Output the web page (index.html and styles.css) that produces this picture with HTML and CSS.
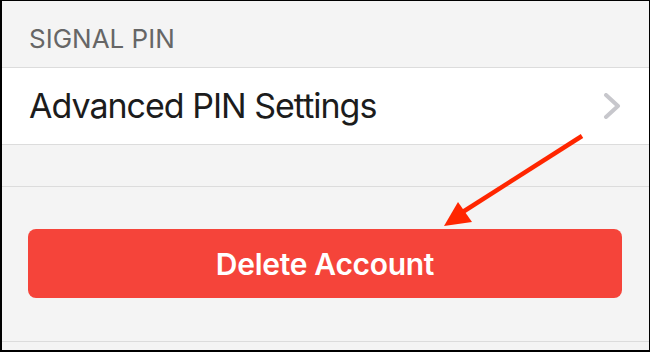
FILE: index.html
```html
<!DOCTYPE html>
<html>
<head>
<meta charset="utf-8">
<link rel="stylesheet" href="styles.css">
</head>
<body>
<div class="frame">
  <div class="section-header">SIGNAL PIN</div>
  <div class="row">
    <span class="row-label">Advanced PIN Settings</span>
    <svg class="chevron" width="18" height="26" viewBox="0 0 18 26"><path d="M3 2 L15 13 L3 24" fill="none" stroke="#c7c7cc" stroke-width="4" stroke-linecap="round" stroke-linejoin="round"/></svg>
  </div>
  <div class="spacer"></div>
  <div class="danger-zone">
    <button class="delete-btn">Delete Account</button>
  </div>
  <div class="footer"></div>
  <svg class="arrow" width="650" height="352" viewBox="0 0 650 352">
    <line x1="582" y1="136" x2="458" y2="215" stroke="#ff2600" stroke-width="4.5" stroke-linecap="butt"/>
    <polygon points="444,226 458,202 472,222" fill="#ff2600"/>
  </svg>
</div>
</body>
</html>
```
FILE: styles.css
```css
* { box-sizing: border-box; }
html, body { margin: 0; padding: 0; }
body {
  width: 650px;
  height: 352px;
  background: #f4f4f4;
  font-family: Inter, "Liberation Sans", sans-serif;
  overflow: hidden;
}
.frame {
  position: relative;
  width: 650px;
  height: 352px;
  border-style: solid;
  border-color: #000;
  border-width: 1px 1px 2px 2px;
  background: #f4f4f4;
  display: flex;
  flex-direction: column;
}
.section-header {
  height: 67px;
  padding-left: 27px;
  padding-top: 22px;
  font-size: 26px;
  line-height: 32px;
  color: #666666;
  border-bottom: 1px solid #dcdcdc;
  letter-spacing: 0;
}
.row {
  height: 77px;
  background: #fff;
  border-bottom: 1px solid #dcdcdc;
  display: flex;
  align-items: center;
  justify-content: space-between;
  padding: 0 28px 0 27px;
}
.row-label {
  font-size: 34px;
  color: #1c1c1c;
  letter-spacing: -1px;
  line-height: 40px;
}
.chevron { display: block; }
.spacer {
  height: 42px;
  border-bottom: 1px solid #dcdcdc;
}
.danger-zone {
  height: 155px;
  padding: 42px 27px 0 26px;
  border-bottom: 1px solid #dcdcdc;
}
.delete-btn {
  display: block;
  width: 594px;
  height: 69px;
  border: none;
  border-radius: 8px;
  background: #f5443a;
  color: #fff;
  font-family: Inter, "Liberation Sans", sans-serif;
  font-size: 30px;
  font-weight: 600;
  letter-spacing: -0.3px;
  padding: 0;
}
.footer { flex: 1; }
.arrow {
  position: absolute;
  left: -2px;
  top: -1px;
  pointer-events: none;
}
```
